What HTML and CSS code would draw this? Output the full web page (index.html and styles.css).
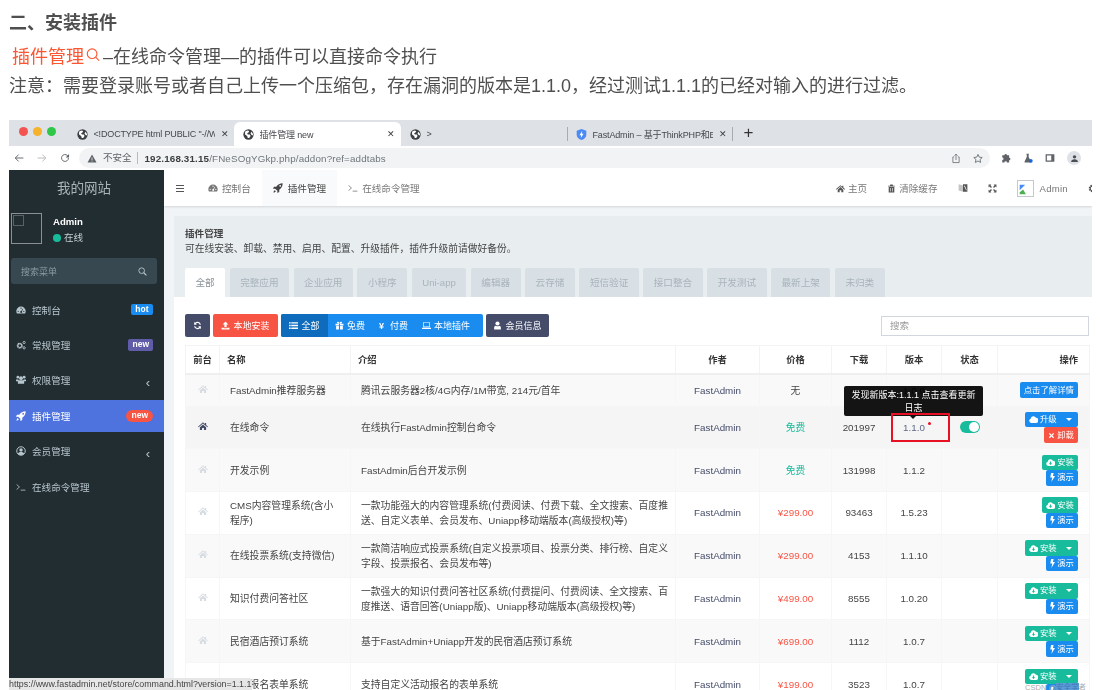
FILE: index.html
```html
<!DOCTYPE html>
<html lang="zh-CN">
<head>
<meta charset="UTF-8">
<meta name="viewport" content="width=device-width, initial-scale=1.0">
<title>安装插件</title>
<link rel="stylesheet" href="styles.css">
</head>
<body>
<svg class="defs" width="0" height="0">
    <symbol id="i-globe" viewBox="0 0 16 16"><circle cx="8" cy="8" r="7.500"/><path fill="#fff" d="M3 4l3-2 3 1-1 2-2 1 1 2 3 0 1 2-2 3-2 0-1-3-3-2zM12 4l2 2 1 3-2 0-2-2z"/></symbol>
    <symbol id="i-home" viewBox="0 0 16 16"><path d="M8 2L0 9l1 1 7-6 7 6 1-1-3-2.600V3h-2v1.900zM3 10v4.500h3.500V11h3v3.500H13V10L8 5.500z"/></symbol>
    <symbol id="i-dash" viewBox="0 0 16 16"><path fill-rule="evenodd" d="M8 2.500a7.500 7.500 0 0 0-7.500 7.500c0 1.400.4 2.500 1 3.500h13c.6-1 1-2.100 1-3.500A7.500 7.500 0 0 0 8 2.500zM8 4a1 1 0 1 1 0 2 1 1 0 0 1 0-2zM3.500 9a1 1 0 1 1 0 2 1 1 0 0 1 0-2zM12.500 9a1 1 0 1 1 0 2 1 1 0 0 1 0-2zM10.500 6l.8.5L9.500 10a1.600 1.600 0 1 1-1-.5z"/></symbol>
    <symbol id="i-rocket" viewBox="0 0 16 16"><path d="M15.500.5C11 .5 7.500 2.500 5.200 6H1.500L0 9h3.500L7 12.500V16l3-1.500v-3.700C13.500 8.500 15.500 5 15.500.5zM11.500 3a1.500 1.500 0 1 1 0 3 1.500 1.500 0 0 1 0-3zM3 11.500c-1.500.5-2 2-2.300 3.800 1.800-.3 3.300-.8 3.800-2.300z"/></symbol>
    <symbol id="i-term" viewBox="0 0 16 16"><path fill="none" stroke="currentColor" stroke-width="1.300" d="M1 4l4.500 4L1 12M7.500 13H15"/></symbol>
    <symbol id="i-cogs" viewBox="0 0 16 16"><circle cx="6" cy="9" r="3.600" fill="none" stroke="currentColor" stroke-width="2.400" stroke-dasharray="1.800 .7"/><circle cx="6" cy="9" r="3" fill="none" stroke="currentColor" stroke-width="1.200"/><circle cx="13" cy="4" r="1.800" fill="none" stroke="currentColor" stroke-width="1.400"/><circle cx="13" cy="12.500" r="1.800" fill="none" stroke="currentColor" stroke-width="1.400"/></symbol>
    <symbol id="i-gear" viewBox="0 0 16 16"><circle cx="8" cy="8" r="5" fill="none" stroke="currentColor" stroke-width="3.500" stroke-dasharray="2.500 1.400"/><circle cx="8" cy="8" r="4" fill="none" stroke="currentColor" stroke-width="1.800"/></symbol>
    <symbol id="i-users" viewBox="0 0 16 16"><circle cx="3" cy="3.500" r="2.200"/><circle cx="13" cy="3.500" r="2.200"/><circle cx="8" cy="5" r="3"/><path d="M0 7h4v3H0zM12 7h4v3h-4zM3 8.500h10V14H3z"/></symbol>
    <symbol id="i-ucircle" viewBox="0 0 16 16"><circle cx="8" cy="8" r="6.800" fill="none" stroke="currentColor" stroke-width="1.600"/><circle cx="8" cy="6.300" r="2.800"/><path d="M3 12.500c.6-2 2.500-3 5-3s4.400 1 5 3c-1.200 1.300-3 2-5 2s-3.800-.7-5-2z"/></symbol>
    <symbol id="i-search" viewBox="0 0 16 16"><circle cx="6.500" cy="6.500" r="5" fill="none" stroke="currentColor" stroke-width="1.600"/><path fill="none" stroke="currentColor" stroke-width="2" d="M10.200 10.200L15 15"/></symbol>
    <symbol id="i-refresh" viewBox="0 0 16 16"><path d="M14 6.500C13.300 3.500 10.900 1.500 8 1.500c-1.700 0-3.200.6-4.400 1.800L2 1.700V6.500h4.800L5 4.700c.8-.8 1.900-1.200 3-1.200 1.800 0 3.400 1.200 3.900 3zM2 9.500c.7 3 3.100 5 6 5 1.700 0 3.200-.6 4.400-1.800l1.600 1.600V9.500H9.200l1.800 1.800c-.8.8-1.900 1.200-3 1.200-1.800 0-3.400-1.200-3.900-3z"/></symbol>
    <symbol id="i-upload" viewBox="0 0 16 16"><path d="M8 1L3 6h3v5h4V6h3zM1 12h4v1h6v-1h4v3H1z"/></symbol>
    <symbol id="i-list" viewBox="0 0 16 16"><path d="M0 2h3v2.500H0zM4 2h12v2.500H4zM0 6.800h3v2.500H0zM4 6.800h12v2.500H4zM0 11.500h3V14H0zM4 11.500h12V14H4z"/></symbol>
    <symbol id="i-gift" viewBox="0 0 16 16"><path d="M1 5h6v3H1zM9 5h6v3H9zM2 9h5v6H2zM9 9h5v6H9zM7 4.500C5 4.500 3.500 3.700 3.500 2.500S5 .8 6 1.500L8 3.500l2-2c1-.7 2.500-.2 2.500 1s-1.500 2-3.500 2z"/></symbol>
    <symbol id="i-laptop" viewBox="0 0 16 16"><path fill-rule="evenodd" d="M2 2h12v9H2zM3.200 3.200v6.600h9.600V3.200zM0 12h16v2H0z"/></symbol>
    <symbol id="i-user" viewBox="0 0 16 16"><circle cx="8" cy="4.500" r="3.700"/><path d="M2 15v-3c0-2 1.500-3.500 3-3.500 1 .7 2 1 3 1s2-.3 3-1c1.500 0 3 1.500 3 3.500v3z"/></symbol>
    <symbol id="i-cloud" viewBox="0 0 16 16"><path d="M4 14a3.800 3.800 0 0 1-1-7.400A5 5 0 0 1 12.400 5 4.500 4.500 0 0 1 12 14z"/></symbol>
    <symbol id="i-clouddl" viewBox="0 0 16 16"><path fill-rule="evenodd" d="M4 14a3.800 3.800 0 0 1-1-7.400A5 5 0 0 1 12.400 5 4.500 4.500 0 0 1 12 14zM7 6v3.500H5l3 3 3-3H9V6z"/></symbol>
    <symbol id="i-bolt" viewBox="3 0 9 16"><path d="M9.500 0H5L3.500 8H7l-1.500 8L12 5.500H8.300z"/></symbol>
    <symbol id="i-times" viewBox="0 0 16 16"><path d="M4 2l4 4 4-4 2 2-4 4 4 4-2 2-4-4-4 4-2-2 4-4-4-4z"/></symbol>
    <symbol id="i-trash" viewBox="0 0 16 16"><path fill-rule="evenodd" d="M6 1h4l1 2h3v1.500H2V3h3zM3 5.500h10V15H3zM5.500 7v6.500h1V7zM9.500 7v6.500h1V7z"/></symbol>
    <symbol id="i-lang" viewBox="0 0 16 16"><path fill-opacity=".35" d="M1 2l7 2v10l-7-2z"/><path d="M8 2h7v12H8zM9.500 4.500l3.500 7h1l-3-7z"/></symbol>
    <symbol id="i-full" viewBox="0 0 16 16"><path d="M1 1h5L4.500 2.800 7 5.300 5.300 7 2.800 4.500 1 6zM15 1v5l-1.800-1.500L10.700 7 9 5.300l2.500-2.500L10 1zM1 15v-5l1.800 1.500L5.300 9 7 10.700l-2.500 2.500L6 15zM15 15h-5l1.500-1.800L9 10.700 10.700 9l2.500 2.500L15 10z"/></symbol>
    <symbol id="i-puzzle" viewBox="0 0 16 16"><path d="M5.500 3.500a2 2 0 1 1 4 0H13v4a2 2 0 1 1 0 4V15H9.500a2 2 0 1 0-4 0H2v-4a2 2 0 1 0 0-4V3.500z"/></symbol>
</svg>

<div class="article">
    <h2>二、安装插件</h2>
    <p class="line"><a class="kw">插件管理<svg class="kw-icon" viewBox="0 0 16 16"><circle cx="7" cy="6.500" r="5.500" fill="none" stroke="currentColor" stroke-width="1.300"/><path fill="none" stroke="currentColor" stroke-width="1.300" d="M11 10.500l4 4"/></svg></a>–在线命令管理—的插件可以直接命令执行</p>
    <p class="line">注意&#65306;需要登录账号或者自己上传一个压缩包&#65292;存在漏洞的版本是1.1.0&#65292;经过测试1.1.1的已经对输入的进行过滤。</p>
</div>

<div class="shot">
    <div class="tabstrip">
        <div class="lights"><i class="red"></i><i class="amber"></i><i class="green"></i></div>
        <div class="tab tab-one"><svg class="ic"><use href="#i-globe"/></svg><span class="tab-title">&lt;!DOCTYPE html PUBLIC "-//W</span><span class="tab-x">✕</span></div>
        <div class="tab tab-active"><svg class="ic"><use href="#i-globe"/></svg><span class="tab-title">插件管理 new</span><span class="tab-x">✕</span></div>
        <div class="tab tab-three"><svg class="ic"><use href="#i-globe"/></svg><span class="tab-title">&gt;</span></div>
        <div class="tab tab-four"><svg class="ic fa-logo" viewBox="0 0 16 16"><path fill="#4a8af4" d="M8 0l7 2.500V8c0 4-3 6.800-7 8-4-1.200-7-4-7-8V2.500z"/><path fill="#fff" d="M9 3L5 9h2.500L7 13l4-6H8.500z"/></svg><span class="tab-title">FastAdmin – 基于ThinkPHP和B</span><span class="tab-x">✕</span></div>
        <span class="tab-plus">+</span>
    </div>

    <div class="urlbar">
        <span class="nav-arrows">
            <svg class="nav-ic" viewBox="0 0 16 16"><path fill="none" stroke="#5f6368" stroke-width="1.500" d="M15 8H2M7.500 2.500L2 8l5.500 5.500"/></svg>
            <svg class="nav-ic" viewBox="0 0 16 16"><path fill="none" stroke="#b5b8bc" stroke-width="1.500" d="M1 8h13M8.500 2.500L14 8l-5.500 5.500"/></svg>
            <svg class="nav-ic" viewBox="0 0 16 16"><path fill="none" stroke="#5f6368" stroke-width="1.500" d="M13.500 8a5.500 5.500 0 1 1-1.600-3.900L14 6.200"/><path fill="#5f6368" d="M14.500 1.500v5.500H9z"/></svg>
        </span>
        <div class="omnibox">
            <svg class="warn" viewBox="0 0 16 16"><path fill="#5f6368" d="M8 1l8 14H0z"/><path fill="#f1f3f4" d="M7.300 6h1.400v5H7.300zM7.300 12h1.400v1.500H7.300z"/></svg>
            <span class="insecure">不安全</span>
            <span class="url"><b>192.168.31.15</b>/FNeSOgYGkp.php/addon?ref=addtabs</span>
            <svg class="omni-ic" viewBox="0 0 16 16"><path fill="none" stroke="#5f6368" stroke-width="1.200" d="M5 5.500H3v9h10v-9h-2M8 10.500V1M5.500 3.500L8 1l2.500 2.500"/></svg>
            <svg class="omni-ic" viewBox="0 0 16 16"><path fill="none" stroke="#5f6368" stroke-width="1.300" d="M8 1.500l2 4.300 4.700.6-3.400 3.200.9 4.700L8 12l-4.200 2.300.9-4.700L1.300 6.400 6 5.800z"/></svg>
        </div>
        <span class="chrome-tools">
            <svg class="tool-ic"><use href="#i-puzzle"/></svg>
            <svg class="tool-ic" viewBox="0 0 16 16"><path d="M5.500 1h4v1.500H9v4L13 14c.3.700 0 1-.6 1H3c-.6 0-.9-.4-.6-1L6 6.500v-4h-.5z"/><circle cx="12.500" cy="12.500" r="3" fill="#1a66d8"/></svg>
            <svg class="tool-ic" viewBox="0 0 16 16"><path fill-rule="evenodd" d="M1 2h14v12H1zM3 4v8h7V4z"/></svg>
            <span class="profile"><svg viewBox="0 0 16 16"><circle cx="8" cy="5" r="3"/><path d="M2 14c0-3 2.500-4.500 6-4.500s6 1.500 6 4.500z"/></svg></span>
        </span>
    </div>

    <div class="app">
        <aside class="sidebar">
            <div class="logo">我的网站</div>
            <div class="user-panel">
                <div class="avatar"><i></i></div>
                <div class="user-info">
                    <div class="user-name">Admin</div>
                    <div class="user-state"><i></i>在线</div>
                </div>
            </div>
            <div class="side-search"><span>搜索菜单</span><svg class="ic"><use href="#i-search"/></svg></div>
            <ul class="menu">
                <li><svg class="ic"><use href="#i-dash"/></svg><span>控制台</span><em class="tag tag-hot">hot</em></li>
                <li><svg class="ic"><use href="#i-cogs"/></svg><span>常规管理</span><em class="tag tag-new">new</em></li>
                <li><svg class="ic"><use href="#i-users"/></svg><span>权限管理</span><em class="chev">‹</em></li>
                <li class="active"><svg class="ic"><use href="#i-rocket"/></svg><span>插件管理</span><em class="tag tag-red">new</em></li>
                <li><svg class="ic"><use href="#i-ucircle"/></svg><span>会员管理</span><em class="chev">‹</em></li>
                <li><svg class="ic"><use href="#i-term"/></svg><span>在线命令管理</span></li>
            </ul>
        </aside>

        <main class="main">
            <nav class="topnav">
                <span class="burger"><i></i><i></i><i></i></span>
                <a class="nav-tab nav-first"><svg class="ic"><use href="#i-dash"/></svg>控制台</a>
                <a class="nav-tab nav-on"><svg class="ic"><use href="#i-rocket"/></svg>插件管理</a>
                <a class="nav-tab"><svg class="ic"><use href="#i-term"/></svg>在线命令管理</a>
                <div class="nav-right">
                    <a><svg class="ic"><use href="#i-home"/></svg>主页</a>
                    <a><svg class="ic"><use href="#i-trash"/></svg>清除缓存</a>
                    <a><svg class="ic ic-lang"><use href="#i-lang"/></svg></a>
                    <a><svg class="ic"><use href="#i-full"/></svg></a>
                    <a class="nav-user"><span class="broken"><svg viewBox="0 0 16 16"><path fill="#4a8af4" d="M1 1h8L1 9z"/><path fill="#4caf50" d="M1 15v-3l5-4 4 7z"/></svg></span>Admin</a>
                    <a><svg class="ic"><use href="#i-gear"/></svg></a>
                </div>
            </nav>

            <div class="content">
                <section class="panel">
                    <header class="panel-head">
                        <div class="panel-title">插件管理</div>
                        <div class="panel-sub">可在线安装、卸载、禁用、启用、配置、升级插件&#65292;插件升级前请做好备份。</div>
                        <div class="tabs">
                            <a class="on">全部</a><a>完整应用</a><a>企业应用</a><a>小程序</a><a>Uni-app</a><a>编辑器</a><a>云存储</a><a>短信验证</a><a>接口整合</a><a>开发测试</a><a>最新上架</a><a>未归类</a>
                        </div>
                    </header>
                    <div class="panel-body">
                        <div class="toolbar">
                            <a class="btn btn-dark btn-refresh"><svg class="ic"><use href="#i-refresh"/></svg></a>
                            <a class="btn btn-red btn-local"><svg class="ic"><use href="#i-upload"/></svg>本地安装</a>
                            <div class="btn-group">
                                <a class="btn btn-blue on"><svg class="ic"><use href="#i-list"/></svg>全部</a>
                                <a class="btn btn-blue"><svg class="ic"><use href="#i-gift"/></svg>免费</a>
                                <a class="btn btn-blue"><span class="yen">¥</span>付费</a>
                                <a class="btn btn-blue"><svg class="ic"><use href="#i-laptop"/></svg>本地插件</a>
                            </div>
                            <a class="btn btn-dark btn-member"><svg class="ic"><use href="#i-user"/></svg>会员信息</a>
                            <div class="search-box">搜索</div>
                        </div>

                        <table class="addons">
                            <colgroup><col class="c-front"><col class="c-name"><col class="c-intro"><col class="c-author"><col class="c-price"><col class="c-dl"><col class="c-ver"><col class="c-state"><col class="c-ops"></colgroup>
                            <thead>
                                <tr><th class="mid">前台</th><th>名称</th><th>介绍</th><th class="mid">作者</th><th class="mid">价格</th><th class="mid">下载</th><th class="mid">版本</th><th class="mid">状态</th><th class="end">操作</th></tr>
                            </thead>
                            <tbody>
                                <tr class="short">
                                    <td class="mid"><svg class="ic home"><use href="#i-home"/></svg></td><td class="pad name">FastAdmin推荐服务器</td><td class="pad">腾讯云服务器2核/4G内存/1M带宽, 214元/首年</td><td class="mid link">FastAdmin</td><td class="mid">无</td><td class="mid"></td><td class="mid">1.0.0</td><td></td>
                                    <td class="end"><a class="mini mini-blue">点击了解详情</a></td>
                                </tr>
                                <tr class="hover">
                                    <td class="mid"><svg class="ic home home-on"><use href="#i-home"/></svg></td><td class="pad name">在线命令</td><td class="pad">在线执行FastAdmin控制台命令</td><td class="mid link">FastAdmin</td><td class="mid free">免费</td><td class="mid">201997</td>
                                    <td class="mid ver-cell">
                                        <span class="ver-link">1.1.0</span><i class="dot"></i>
                                        <div class="tip">发现新版本:1.1.1 点击查看更新日志</div>
                                        <div class="mark"></div>
                                    </td>
                                    <td class="mid"><span class="toggle"></span></td>
                                    <td class="end"><a class="mini mini-blue mini-wide"><svg class="ic"><use href="#i-cloud"/></svg>升级<i class="caret"></i></a><a class="mini mini-red"><svg class="ic ic-x"><use href="#i-times"/></svg>卸载</a></td>
                                </tr>
                                <tr>
                                    <td class="mid"><svg class="ic home"><use href="#i-home"/></svg></td><td class="pad name">开发示例</td><td class="pad">FastAdmin后台开发示例</td><td class="mid link">FastAdmin</td><td class="mid free">免费</td><td class="mid">131998</td><td class="mid">1.1.2</td><td></td>
                                    <td class="end"><a class="mini mini-green"><svg class="ic"><use href="#i-clouddl"/></svg>安装</a><a class="mini mini-blue"><svg class="ic ic-bolt"><use href="#i-bolt"/></svg>演示</a></td>
                                </tr>
                                <tr>
                                    <td class="mid"><svg class="ic home"><use href="#i-home"/></svg></td><td class="pad name">CMS内容管理系统(含小程序)</td><td class="pad">一款功能强大的内容管理系统(付费阅读、付费下载、全文搜索、百度推送、自定义表单、会员发布、Uniapp移动端版本(高级授权)等)</td><td class="mid link">FastAdmin</td><td class="mid price">¥299.00</td><td class="mid">93463</td><td class="mid">1.5.23</td><td></td>
                                    <td class="end"><a class="mini mini-green"><svg class="ic"><use href="#i-clouddl"/></svg>安装</a><a class="mini mini-blue"><svg class="ic ic-bolt"><use href="#i-bolt"/></svg>演示</a></td>
                                </tr>
                                <tr>
                                    <td class="mid"><svg class="ic home"><use href="#i-home"/></svg></td><td class="pad name">在线投票系统(支持微信)</td><td class="pad">一款简洁响应式投票系统(自定义投票项目、投票分类、排行榜、自定义字段、投票报名、会员发布等)</td><td class="mid link">FastAdmin</td><td class="mid price">¥299.00</td><td class="mid">4153</td><td class="mid">1.1.10</td><td></td>
                                    <td class="end"><a class="mini mini-green mini-wide"><svg class="ic"><use href="#i-clouddl"/></svg>安装<i class="caret"></i></a><a class="mini mini-blue"><svg class="ic ic-bolt"><use href="#i-bolt"/></svg>演示</a></td>
                                </tr>
                                <tr>
                                    <td class="mid"><svg class="ic home"><use href="#i-home"/></svg></td><td class="pad name">知识付费问答社区</td><td class="pad">一款强大的知识付费问答社区系统(付费提问、付费阅读、全文搜索、百度推送、语音回答(Uniapp版)、Uniapp移动端版本(高级授权)等)</td><td class="mid link">FastAdmin</td><td class="mid price">¥499.00</td><td class="mid">8555</td><td class="mid">1.0.20</td><td></td>
                                    <td class="end"><a class="mini mini-green mini-wide"><svg class="ic"><use href="#i-clouddl"/></svg>安装<i class="caret"></i></a><a class="mini mini-blue"><svg class="ic ic-bolt"><use href="#i-bolt"/></svg>演示</a></td>
                                </tr>
                                <tr>
                                    <td class="mid"><svg class="ic home"><use href="#i-home"/></svg></td><td class="pad name">民宿酒店预订系统</td><td class="pad">基于FastAdmin+Uniapp开发的民宿酒店预订系统</td><td class="mid link">FastAdmin</td><td class="mid price">¥699.00</td><td class="mid">1112</td><td class="mid">1.0.7</td><td></td>
                                    <td class="end"><a class="mini mini-green mini-wide"><svg class="ic"><use href="#i-clouddl"/></svg>安装<i class="caret"></i></a><a class="mini mini-blue"><svg class="ic ic-bolt"><use href="#i-bolt"/></svg>演示</a></td>
                                </tr>
                                <tr>
                                    <td class="mid"><svg class="ic home"><use href="#i-home"/></svg></td><td class="pad name">活动报名表单系统</td><td class="pad">支持自定义活动报名的表单系统</td><td class="mid link">FastAdmin</td><td class="mid price">¥199.00</td><td class="mid">3523</td><td class="mid">1.0.7</td><td></td>
                                    <td class="end"><a class="mini mini-green mini-wide"><svg class="ic"><use href="#i-clouddl"/></svg>安装<i class="caret"></i></a><a class="mini mini-blue"><svg class="ic ic-bolt"><use href="#i-bolt"/></svg>演示</a></td>
                                </tr>
                            </tbody>
                        </table>
                    </div>
                </section>
            </div>
        </main>
    </div>

    <div class="status-link">https://www.fastadmin.net/store/command.html?version=1.1.1</div>
</div>
<div class="watermark">CSDN @<span>安全学</span>者</div>
</body>
</html>
```

FILE: styles.css
```css
* {
    box-sizing: border-box;
}

html, body {
    margin: 0;
    height: 690px;
    overflow: hidden;
}

body {
    position: relative;
    background-color: #fff;
    color: #4f4f4f;
    font-family: "Liberation Sans", "Noto Sans CJK SC", sans-serif;
}

.defs {
    position: absolute;
}

.ic {
    width: 10px;
    height: 10px;
    fill: currentColor;
    flex: none;
}

/* article text above the picture */
.article {
    height: 120px;
    padding: 12px 0 0 9px;
    filter: blur(0.3px);
}

.article h2 {
    margin: 0 0 9px;
    font-size: 18px;
    line-height: 22px;
    font-weight: bold;
}

.line {
    margin: 0;
    font-size: 18px;
    line-height: 29px;
    white-space: nowrap;
}

.kw {
    color: #fc5531;
    margin-left: 3px;
}

.kw-icon {
    width: 14px;
    height: 14px;
    margin: 0 3px 6px 2px;
    vertical-align: middle;
}

/* the browser window */
.shot {
    position: relative;
    width: 1083px;
    height: 570px;
    margin-left: 9px;
    overflow: hidden;
    filter: blur(0.45px);
}

.tabstrip {
    display: flex;
    height: 26px;
    padding-top: 2px;
    background-color: #dee1e6;
    color: #45484d;
    font-size: 9px;
    letter-spacing: -0.15px;
}

.lights {
    display: flex;
    gap: 5px;
    width: 67.5px;
    padding: 5px 0 0 9.5px;
    flex: none;
}

.lights i {
    width: 9px;
    height: 9px;
    border-radius: 50%;
}

.lights .red { background-color: #f4544f; }
.lights .amber { background-color: #f5b22d; }
.lights .green { background-color: #2ec748; }

.tab {
    display: flex;
    align-items: center;
    gap: 6px;
    height: 24px;
    padding: 0 5px 0 0;
    flex: none;
}

.tab .ic {
    width: 11px;
    height: 11px;
    fill: #3c4043;
}

.tab-one { width: 157.5px; }
.tab-three { width: 165.5px; padding-left: 8.5px; }
.tab-four {
    width: 166px;
    height: 14px;
    margin-top: 5px;
    padding-left: 8px;
    padding-right: 5px;
    border-left: 1px solid #a8abb0;
    border-right: 1px solid #a8abb0;
}

.tab-active {
    width: 167px;
    padding-left: 8.5px;
    padding-right: 6px;
    background-color: #fff;
    border-radius: 6px 6px 0 0;
}

.tab-title {
    flex: 1;
    min-width: 0;
    overflow: hidden;
    white-space: nowrap;
}

.tab-x {
    font-size: 9px;
    color: #3c4043;
}

.tab-plus {
    margin: 0 0 0 11px;
    font-size: 17px;
    line-height: 22px;
    color: #333;
}

.urlbar {
    display: flex;
    align-items: center;
    height: 24px;
    background-color: #fff;
}

.nav-arrows {
    display: flex;
    gap: 13px;
    width: 70px;
    padding-left: 5px;
    flex: none;
}

.nav-ic {
    width: 10px;
    height: 10px;
}

.omnibox {
    display: flex;
    align-items: center;
    width: 911px;
    height: 20px;
    padding: 0 7px 0 8px;
    background-color: #f1f3f4;
    border-radius: 10px;
    font-size: 9.5px;
    flex: none;
}

.warn {
    width: 10px;
    height: 9px;
    flex: none;
}

.insecure {
    margin-left: 6px;
    padding-right: 5px;
    border-right: 1px solid #b9bbbe;
    line-height: 12px;
    color: #5f6368;
}

.url {
    flex: 1;
    margin-left: 7px;
    font-size: 9.8px;
    color: #70757a;
    letter-spacing: 0.15px;
}

.url b {
    color: #3c4043;
    font-weight: bold;
}

.omni-ic {
    width: 10px;
    height: 11px;
    margin-left: 12px;
    flex: none;
}

.chrome-tools {
    display: flex;
    align-items: center;
    gap: 12px;
    padding-left: 11px;
}

.tool-ic {
    width: 10px;
    height: 10px;
    fill: #5f6368;
}

.profile {
    display: flex;
    align-items: center;
    justify-content: center;
    width: 14px;
    height: 14px;
    border-radius: 50%;
    background-color: #dee1e6;
}

.profile svg {
    width: 9px;
    height: 9px;
    fill: #4a4d52;
}

/* admin page inside the browser */
.app {
    display: flex;
    height: 520px;
}

.sidebar {
    width: 155px;
    background-color: #222d32;
    color: #b8c7ce;
    flex: none;
}

.logo {
    height: 36px;
    padding-right: 5px;
    font-size: 13.5px;
    line-height: 37px;
    text-align: center;
    color: #a9b4b9;
}

.user-panel {
    display: flex;
    height: 52px;
    padding: 7px 0 0 2px;
}

.avatar {
    width: 31px;
    height: 31px;
    padding: 1px;
    border: 1px solid #8a9094;
}

.avatar i {
    display: block;
    width: 11px;
    height: 11px;
    border: 1px solid #5a6166;
}

.user-info {
    margin-left: 11px;
    font-size: 9.6px;
}

.user-name {
    margin-top: 2px;
    color: #fff;
    font-weight: bold;
    line-height: 13px;
}

.user-state {
    display: flex;
    align-items: center;
    margin-top: 4px;
    line-height: 12px;
    color: #c5d0d5;
}

.user-state i {
    width: 8px;
    height: 8px;
    margin-right: 3px;
    border-radius: 50%;
    background-color: #18bc9c;
}

.side-search {
    display: flex;
    align-items: center;
    justify-content: space-between;
    width: 146px;
    height: 26px;
    margin-left: 2px;
    padding: 0 10px;
    border-radius: 3px;
    background-color: #374850;
    font-size: 9px;
    color: #8b9ca4;
}

.side-search .ic {
    width: 9px;
    height: 9px;
    color: #b8c7ce;
}

.menu {
    display: flex;
    flex-direction: column;
    gap: 4px;
    margin: 10px 0 0;
    padding: 0;
    list-style: none;
}

.menu li {
    display: flex;
    align-items: center;
    gap: 6px;
    height: 31.4px;
    padding: 0 11px 0 7px;
    font-size: 9.6px;
}

.menu span {
    flex: 1;
}

.menu li.active {
    background-color: #4e73df;
    color: #fff;
}

.tag {
    padding: 0 4px;
    border-radius: 2px;
    font-size: 8.5px;
    font-style: normal;
    font-weight: bold;
    line-height: 11.5px;
    color: #fff;
}

.tag-hot { background-color: #1a8cf0; padding: 0 4.5px; }
.tag-new { background-color: #605ca8; }
.tag-red { background-color: #f75444; border-radius: 7px; padding: 0 5px; }

.chev {
    padding: 5px 3px 0 0;
    font-style: normal;
    font-size: 13px;
    line-height: 13px;
}

.main {
    flex: 1;
    min-width: 0;
    background-color: #f1f4f6;
    overflow: hidden;
}

.topnav {
    display: flex;
    align-items: center;
    height: 36px;
    background-color: #fff;
    box-shadow: 0 1px 2px rgba(0, 0, 0, 0.12);
    font-size: 9.6px;
    color: #777;
}

.burger {
    display: flex;
    flex-direction: column;
    gap: 2px;
    width: 8px;
    margin-left: 12px;
}

.burger i {
    height: 1px;
    background-color: #555;
}

.nav-tab {
    display: flex;
    align-items: center;
    gap: 4px;
    height: 36px;
    padding: 0 11px;
    white-space: nowrap;
}

.nav-first {
    margin-left: 13px;
}

.nav-on {
    gap: 5px;
    background-color: #f9fafb;
    color: #444;
}

.nav-right {
    display: flex;
    align-items: center;
    margin-left: auto;
    width: 256px;
    flex: none;
    gap: 20px;
}

.nav-right a {
    display: flex;
    align-items: center;
    gap: 3px;
    white-space: nowrap;
}

.nav-right .ic {
    width: 9px;
    height: 9px;
    color: #555;
}

.nav-right .ic-lang {
    width: 10px;
    height: 10px;
}

.nav-right .nav-user {
    gap: 6px;
    letter-spacing: 0.2px;
}

.broken {
    display: block;
    width: 17px;
    height: 17px;
    padding: 3px 2px 0 1px;
    border: 1px solid #c5c8cc;
}

.broken svg {
    display: block;
    width: 11px;
    height: 11px;
}

.content {
    padding: 10px 0 0 10px;
}

.panel {
    width: 918px;
    background-color: #fff;
}

.panel-head {
    height: 81px;
    padding: 12px 11px 0;
    background-color: #e8edf0;
}

.panel-title {
    font-size: 9.6px;
    line-height: 12px;
    font-weight: bold;
    color: #444;
}

.panel-sub {
    margin-top: 3px;
    font-size: 9.75px;
    line-height: 12px;
    color: #444;
}

.tabs {
    display: flex;
    gap: 4.5px;
    margin-top: 13px;
}

.tabs a {
    padding: 0 10.5px;
    height: 29px;
    border-radius: 2px 2px 0 0;
    background-color: #d8dfe5;
    font-size: 9.6px;
    line-height: 29px;
    color: #a9b4bb;
    white-space: nowrap;
}

.tabs a.on {
    background-color: #fff;
    color: #8a9299;
}

.panel-body {
    padding: 17px 3px 0 11px;
}

.toolbar {
    display: flex;
    align-items: center;
    gap: 3px;
    height: 23px;
    margin-bottom: 8px;
}

.btn {
    display: flex;
    align-items: center;
    justify-content: center;
    gap: 3px;
    height: 23px;
    border-radius: 2px;
    font-size: 9px;
    color: #fff;
    white-space: nowrap;
}

.btn .ic {
    width: 9px;
    height: 9px;
}

.btn-dark { background-color: #444c69; }
.btn-red { background-color: #f75444; }
.btn-blue { background-color: #1a8cf0; padding: 0 7px; }
.btn-blue.on { background-color: #0f6cbd; width: 47px; padding: 0; border-radius: 2px 0 0 2px; }

.btn-refresh { width: 25px; }
.btn-local { width: 65px; }
.btn-member { width: 63px; }

.yen {
    font-weight: bold;
    font-size: 9px;
    width: 8px;
}

.btn-group {
    display: flex;
    width: 202px;
    background-color: #1a8cf0;
    border-radius: 2px;
}

.search-box {
    width: 208px;
    height: 20px;
    margin-left: auto;
    padding-left: 8px;
    border: 1px solid #d2d6de;
    font-size: 9.6px;
    line-height: 18px;
    color: #999;
}

.addons {
    width: 904px;
    table-layout: fixed;
    border-collapse: collapse;
    font-size: 9.8px;
    color: #444;
}

.c-front { width: 34px; }
.c-name { width: 131px; }
.c-intro { width: 325px; }
.c-author { width: 84px; }
.c-price { width: 72px; }
.c-dl { width: 55px; }
.c-ver { width: 55px; }
.c-state { width: 56px; }
.c-ops { width: 92px; }

.addons th {
    height: 28px;
    padding: 0 7px;
    border: 1px solid #f3f3f3;
    border-bottom: 2px solid #efefef;
    font-size: 9.3px;
    text-align: left;
    font-weight: bold;
    color: #333;
    white-space: nowrap;
}

.addons th.mid, .addons td.mid {
    padding: 0;
    text-align: center;
}

.addons td {
    height: 42.8px;
    padding: 0 8px;
    border: 1px solid #f6f6f6;
    line-height: 15px;
    vertical-align: middle;
}

.addons td.pad {
    padding: 0 6px 0 10px;
}

.addons td.name {
    padding-right: 14px;
}

.addons .end {
    padding: 0 11px 0 0;
    text-align: right;
}

.addons tbody tr:nth-child(odd) {
    background-color: #f9f9f9;
}

.addons tbody tr.hover {
    background-color: #f5f5f5;
}

.addons tr.short td {
    height: 32.5px;
}

.home {
    color: #d8dde3;
}

.home-on {
    color: #444c69;
}

.link { color: #444c69; }
.free { color: #18bc9c; }
.price { color: #f75444; }

.mini {
    display: flex;
    align-items: center;
    justify-content: center;
    gap: 2px;
    width: max-content;
    height: 15.5px;
    margin: 0 0 0 auto;
    padding: 0 4px;
    border-radius: 2px;
    font-size: 8.4px;
    line-height: 15px;
    color: #fff;
    white-space: nowrap;
}

.mini .ic {
    width: 9px;
    height: 9px;
}

.mini .ic-bolt {
    width: 5px;
}

.mini .ic-x {
    width: 7px;
    height: 7px;
}

.mini-blue { background-color: #1a8cf0; }
.mini-green { background-color: #18bc9c; }
.mini-red { background-color: #f75444; }

.mini-wide {
    width: 53px;
    justify-content: flex-start;
}

.caret {
    width: 0;
    height: 0;
    margin-left: auto;
    margin-right: 2px;
    border-top: 3px solid #fff;
    border-left: 3px solid transparent;
    border-right: 3px solid transparent;
}

.ver-cell {
    position: relative;
}

.ver-link {
    color: #5b6a86;
}

.dot {
    position: absolute;
    top: 15px;
    left: 41px;
    width: 3px;
    height: 3px;
    border-radius: 50%;
    background-color: #e81123;
}

.tip {
    position: absolute;
    top: -21px;
    left: -43px;
    width: 139px;
    height: 30px;
    padding: 3px 4px;
    border-radius: 2px;
    background-color: rgba(0, 0, 0, 0.92);
    color: #fff;
    font-size: 9px;
    line-height: 13px;
    text-align: center;
    z-index: 2;
}

.tip::after {
    content: "";
    position: absolute;
    bottom: -3px;
    left: 66px;
    border-top: 3px solid #111;
    border-left: 3px solid transparent;
    border-right: 3px solid transparent;
}

.mark {
    position: absolute;
    top: 6px;
    left: 4px;
    width: 59px;
    height: 29px;
    border: 2px solid #e81123;
    z-index: 3;
}

.toggle {
    display: inline-block;
    position: relative;
    width: 20px;
    height: 12px;
    margin-top: 3px;
    border-radius: 6px;
    background-color: #18bc9c;
}

.toggle::after {
    content: "";
    position: absolute;
    top: 1px;
    right: 1px;
    width: 10px;
    height: 10px;
    border-radius: 50%;
    background-color: #fff;
}

.status-link {
    position: absolute;
    left: 0;
    bottom: 0;
    width: 243px;
    height: 12px;
    background-color: #e6e6e6;
    border-radius: 0 3px 0 0;
    font-size: 8.9px;
    line-height: 12px;
    color: #444;
    white-space: nowrap;
    overflow: hidden;
}

.watermark {
    position: absolute;
    right: 14px;
    bottom: -3px;
    font-size: 7.5px;
    line-height: 10px;
    color: #aaa;
}

.watermark span {
    background-color: #5c9bd8;
    color: #3c78b8;
}
```
